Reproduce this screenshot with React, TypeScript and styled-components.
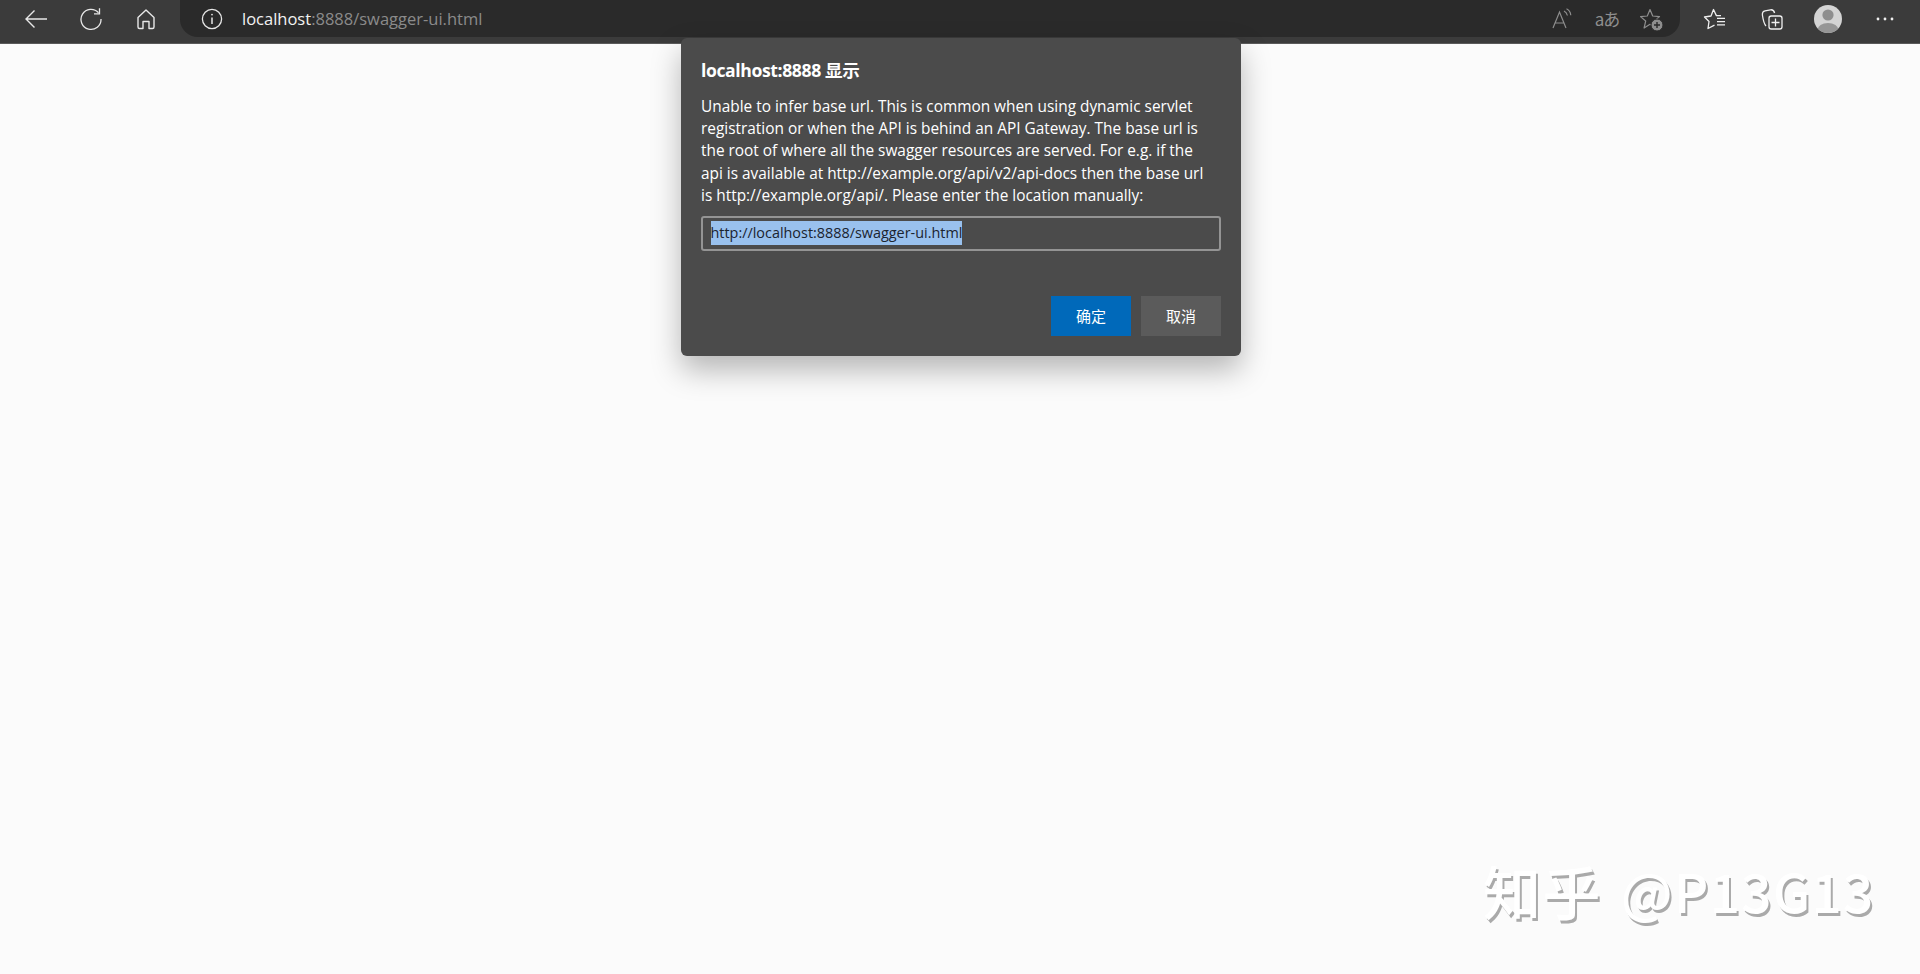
import styled, { createGlobalStyle } from "styled-components";

const GlobalStyle = createGlobalStyle`
html, body {
  margin: 0;
  padding: 0;
  height: 100%;
  background: #fbfbfb;
  overflow: hidden;
}
#root {
  height: 100%;
}
`

const UI_FONT = `"Open Sans", "Noto Sans CJK SC", sans-serif`;

const ReadAloudIcon = () => (
  <svg width="24" height="24" viewBox="0 0 24 24" fill="none" stroke="currentColor" strokeWidth="1.2">
    <path d="M3 21 L9.5 5 L16 21 M5.2 16 H13.8" />
    <path d="M14 4 C16 5 17 6.5 17.4 8.5 M16.5 1.8 C19 3 20.5 5.5 20.8 8.2" />
  </svg>
);

const StarPlusIcon = () => (
  <svg width="24" height="24" viewBox="0 0 24 24" fill="none">
    <path d="M10 2.5 L12.7 9 L19.5 9.6 L14.3 14 L15.9 21 L10 17.3 L4.1 21 L5.7 14 L0.5 9.6 L7.3 9 Z" stroke="currentColor" strokeWidth="1.2" strokeLinejoin="round" />
    <circle cx="17" cy="18" r="6" fill="currentColor" stroke="#2a2a2a" />
    <path d="M17 15 V21 M14 18 H20" stroke="#2a2a2a" strokeWidth="1.4" />
  </svg>
);

const FavoritesIcon = () => (
  <svg width="24" height="24" viewBox="0 0 24 24" fill="none" stroke="currentColor" strokeWidth="1.3">
    <path d="M18 8.6 H13.4 L10.5 2.5 L8 9 L1.5 10 L6 14.5 L5 21.5 L11.5 18.2" strokeLinejoin="round" />
    <path d="M14 11.4 H22 M14 14.6 H22 M14 17.8 H22" />
  </svg>
);

const CollectionsIcon = () => (
  <svg width="24" height="24" viewBox="0 0 24 24" fill="none" stroke="currentColor" strokeWidth="1.3">
    <rect x="9" y="9" width="13" height="13" rx="2.2" />
    <path d="M15.5 11.5 V19.5 M11.5 15.5 H19.5" />
    <path d="M6 19 C4 17 3 12 2.4 8 C2.2 5.5 3 4.2 5 3.8 L10.5 2.8 C12.5 2.5 14 3.5 14.6 6" />
  </svg>
);

const App = () => {
  return (
    <>
      <GlobalStyle />
      <Page>
        <Toolbar>
          <NavButton>
            <svg width="24" height="24" viewBox="0 0 24 24" fill="none" stroke="currentColor" strokeWidth="1.4">
              <path d="M23 12 H2 M10.5 3.5 L2 12 L10.5 20.5" />
            </svg>
          </NavButton>
          <NavButton>
            <svg width="24" height="24" viewBox="0 0 24 24" fill="none" stroke="currentColor" strokeWidth="1.3">
              <path d="M19.5 5.8 A10 10 0 1 0 22 12" />
              <path d="M20.5 1.2 V6.8 H15" />
            </svg>
          </NavButton>
          <NavButton>
            <svg width="24" height="24" viewBox="0 0 24 24" fill="none" stroke="currentColor" strokeWidth="1.4">
              <path d="M4 10.5 L12 3 L20 10.5 V20 Q20 21.5 18.5 21.5 H15 V14.5 H9 V21.5 H5.5 Q4 21.5 4 20 Z" strokeLinejoin="round" />
            </svg>
          </NavButton>
          <AddressBar>
            <InfoIcon>
              <svg width="22" height="22" viewBox="0 0 22 22" fill="none" stroke="currentColor" strokeWidth="1.3">
                <circle cx="11" cy="11" r="9.6" />
                <path d="M11 9.5 V16" strokeWidth="1.5" />
                <circle cx="11" cy="6.6" r="0.9" fill="currentColor" stroke="none" />
              </svg>
            </InfoIcon>
            <Url>
              <Host>localhost</Host>:8888/swagger-ui.html
            </Url>
            <AddressActions>
              <ActionIcon><ReadAloudIcon /></ActionIcon>
              <ActionIcon><TranslateGlyph>aあ</TranslateGlyph></ActionIcon>
              <ActionIcon><StarPlusIcon /></ActionIcon>
            </AddressActions>
          </AddressBar>
          <ToolGroup>
            <ToolButton><FavoritesIcon /></ToolButton>
            <ToolButton><CollectionsIcon /></ToolButton>
            <ToolButton>
              <Avatar>
                <svg width="28" height="28" viewBox="0 0 28 28">
                  <circle cx="14" cy="10" r="5.6" fill="#8e8e8e" />
                  <ellipse cx="14" cy="25" rx="10.5" ry="7" fill="#969696" />
                </svg>
              </Avatar>
            </ToolButton>
            <ToolButton>
              <svg width="20" height="4" viewBox="0 0 20 4" fill="currentColor">
                <circle cx="3" cy="2" r="1.4" />
                <circle cx="10" cy="2" r="1.4" />
                <circle cx="17" cy="2" r="1.4" />
              </svg>
            </ToolButton>
          </ToolGroup>
        </Toolbar>

        <Dialog>
          <DialogTitle>localhost:8888 显示</DialogTitle>
          <DialogMessage>
            Unable to infer base url. This is common when using dynamic servlet registration or when
            the API is behind an API Gateway. The base url is the root of where all the swagger
            resources are served. For e.g. if the api is available at
            http://example.org/api/v2/api-docs then the base url is http://example.org/api/. Please
            enter the location manually:
          </DialogMessage>
          <PromptInput>
            <Selected>http://localhost:8888/swagger-ui.html</Selected>
          </PromptInput>
          <DialogButtons>
            <DialogButton $primary>确定</DialogButton>
            <DialogButton>取消</DialogButton>
          </DialogButtons>
        </Dialog>

        <Watermark>
          <WatermarkName>知乎</WatermarkName>
          <span>@P13G13</span>
        </Watermark>
      </Page>
    </>
  )
}
export default App;

const Page = styled.div`
position:relative;
height:100%;
background:#fbfbfb;
font-family:${UI_FONT};
`

const Toolbar = styled.header`
height:43px;
box-sizing:content-box;
border-bottom:1px solid #5a5a5a;
background:#3b3b3b;
display:flex;
align-items:flex-start;
padding-left:13px;
gap:10px;
color:#e8e8e8;
`

const NavButton = styled.div`
width:45px;
height:37px;
display:flex;
align-items:center;
justify-content:center;
flex-shrink:0;
`

const AddressBar = styled.div`
width:1500px;
height:37px;
margin-left:2px;
flex-shrink:0;
background:#2a2a2a;
border-radius:0 0 18px 18px;
display:flex;
align-items:center;
padding-left:21px;
box-sizing:border-box;
`

const InfoIcon = styled.div`
display:flex;
color:#e6e6e6;
margin-right:19px;
`

const Url = styled.div`
font-size:16.5px;
color:#8b8b8b;
`

const Host = styled.span`
color:#f2f2f2;
`

const AddressActions = styled.div`
margin-left:auto;
margin-right:16px;
display:flex;
align-items:center;
gap:21px;
color:#8e8e8e;
`

const ActionIcon = styled.div`
width:24px;
height:24px;
display:flex;
align-items:center;
justify-content:center;
`

const TranslateGlyph = styled.span`
font-family:"Noto Sans CJK JP", sans-serif;
font-size:17px;
letter-spacing:-1px;
white-space:nowrap;
`

const ToolGroup = styled.div`
display:flex;
align-items:center;
height:37px;
margin-left:-3px;
`

const ToolButton = styled.div`
width:56.5px;
height:37px;
display:flex;
align-items:center;
justify-content:center;
color:#efefef;
`

const Avatar = styled.div`
width:28px;
height:28px;
border-radius:50%;
background:#d4d4d4;
overflow:hidden;
display:flex;
`

const Dialog = styled.div`
position:absolute;
top:38px;
left:681px;
width:560px;
height:318px;
box-sizing:border-box;
padding:20px 20px 20px;
background:#4b4b4b;
border-radius:6px;
box-shadow:0 14px 30px rgba(0,0,0,0.28);
color:#fff;
display:flex;
flex-direction:column;
`

const DialogTitle = styled.div`
font-size:17.6px;
line-height:24px;
font-weight:700;
letter-spacing:-0.4px;
color:#fff;
`

const DialogMessage = styled.div`
margin-top:13.5px;
padding-right:10px;
font-size:15.4px;
line-height:22.4px;
`

const PromptInput = styled.div`
margin-top:8px;
height:35px;
box-sizing:border-box;
border:2.5px solid #949494;
border-radius:3px;
padding:0 7.5px;
display:flex;
align-items:center;
font-size:14.4px;
`

const Selected = styled.span`
background:#99c1ee;
color:#1b2430;
line-height:24px;
`

const DialogButtons = styled.div`
margin-top:auto;
display:flex;
justify-content:flex-end;
gap:10px;
`

const DialogButton = styled.div<{ $primary?: boolean }>`
width:80px;
height:40px;
padding-bottom:2px;
box-sizing:border-box;
display:flex;
align-items:center;
justify-content:center;
font-size:15px;
color:#fff;
background:${(p) => (p.$primary ? "#0069ba" : "#5b5b5b")};
`

const Watermark = styled.div`
position:absolute;
left:1483px;
top:852px;
display:flex;
align-items:center;
gap:19px;
font-family:"Noto Sans CJK SC", sans-serif;
font-size:53px;
font-weight:500;
line-height:76px;
letter-spacing:1.4px;
white-space:nowrap;
color:#fff;
text-shadow:2px 3px 0 #aaaaaa;
`

const WatermarkName = styled.span`
font-size:58px;
letter-spacing:1.5px;
`
